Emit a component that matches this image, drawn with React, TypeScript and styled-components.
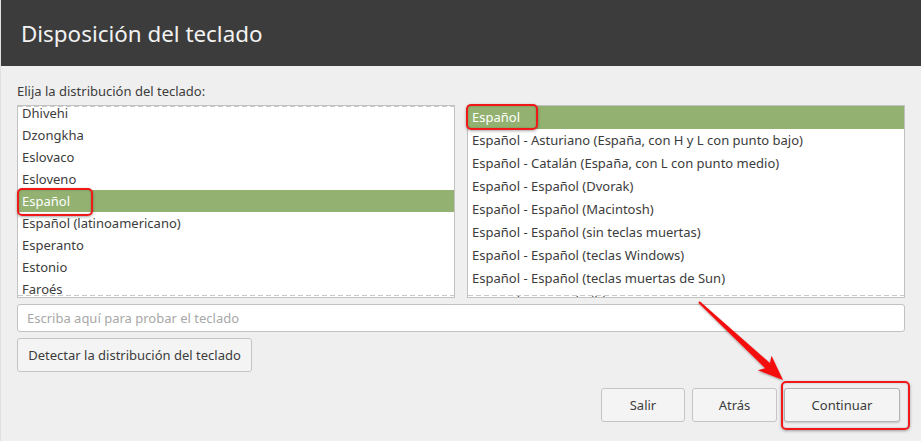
import React from "react";
import styled, { createGlobalStyle } from "styled-components";

const Global = createGlobalStyle`
  html, body { margin: 0; padding: 0; background: #efefef; }
  body { font-family: "Noto Sans", "DejaVu Sans", sans-serif; color: #3c3c3c; }
  * { box-sizing: border-box; }
`;

const Page = styled.div`
  position: relative;
  width: 921px;
  height: 441px;
  overflow: hidden;
  background: #efefef;
  display: flex;
  flex-direction: column;
  border-left: 1px solid #e0e0e0;
`;

const Header = styled.header`
  height: 66px;
  flex: none;
  background: #3c3c3c;
  display: flex;
  align-items: center;
  padding: 0 0 0 21px;
  margin-left: -1px;
`;

const Title = styled.h1`
  margin: 0;
  font-size: 22.4px;
  font-weight: 400;
  color: #f2f2f2;
  letter-spacing: 0;
`;

const Body = styled.main`
  flex: 1;
  display: flex;
  flex-direction: column;
  padding: 16px 16px 0 16px;
`;

const Label = styled.div`
  font-size: 13px;
  line-height: 18px;
  height: 18px;
  margin-bottom: 5px;
`;

const Lists = styled.div`
  display: flex;
  gap: 12px;
`;

const ListBox = styled.div<{ $h: number }>`
  position: relative;
  flex: 1;
  height: ${(p) => p.$h}px;
  background: #ffffff;
  border: 1px solid #c2c2c2;
  overflow: hidden;
`;

const Dashes = styled.div<{ $bottom?: boolean }>`
  position: absolute;
  left: 0;
  right: 0;
  height: 1px;
  ${(p) => (p.$bottom ? "bottom: 1px;" : "top: 0;")}
  background: repeating-linear-gradient(90deg, #c8c8c8 0 5px, transparent 5px 8px);
  z-index: 2;
`;

const Items = styled.ul<{ $shift: number }>`
  list-style: none;
  margin: ${(p) => -p.$shift}px 0 0 0;
  padding: 0;
`;

const Item = styled.li<{ $h: number; $sel?: boolean }>`
  height: ${(p) => p.$h}px;
  line-height: ${(p) => p.$h}px;
  padding-left: 4px;
  font-size: 13px;
  white-space: nowrap;
  background: ${(p) => (p.$sel ? "#93b170" : "transparent")};
  color: ${(p) => (p.$sel ? "#ffffff" : "#3c3c3c")};
`;

const Input = styled.input`
  margin-top: 6px;
  height: 28px;
  border: 1px solid #c2c2c2;
  border-radius: 3px;
  background: #fff;
  padding: 0 9px;
  font-family: inherit;
  font-size: 13px;
  color: #3c3c3c;
  outline: none;
  &::placeholder { color: #a8a8a8; }
`;

const Button = styled.button<{ $w: number; $default?: boolean }>`
  width: ${(p) => p.$w}px;
  height: 34px;
  background: #f4f4f4;
  border: 1px solid ${(p) => (p.$default ? "#b4b4b4" : "#c4c4c4")};
  border-radius: 3px;
  font-family: inherit;
  font-size: 13px;
  color: #3c3c3c;
  padding: 0;
  box-shadow: ${(p) => (p.$default ? "0 1px 2px rgba(0,0,0,0.18)" : "none")};
`;

const DetectRow = styled.div`
  margin-top: 6px;
  display: flex;
`;

const Footer = styled.footer`
  margin-top: 16px;
  display: flex;
  justify-content: flex-end;
  gap: 7px;
  padding-right: 5px;
`;

const Mark = styled.div<{ $x: number; $y: number; $w: number; $h: number }>`
  position: absolute;
  left: ${(p) => p.$x}px;
  top: ${(p) => p.$y}px;
  width: ${(p) => p.$w}px;
  height: ${(p) => p.$h}px;
  border: 2px solid #f01818;
  border-radius: 5px;
  box-shadow: 0 1px 3px rgba(0, 0, 0, 0.35), inset 0 0 2px rgba(0,0,0,0.25);
  pointer-events: none;
  z-index: 5;
`;

const Overlay = styled.svg`
  position: absolute;
  left: 0;
  top: 0;
  width: 921px;
  height: 441px;
  pointer-events: none;
  z-index: 6;
`;

const leftItems = [
  "Dhivehi",
  "Dzongkha",
  "Eslovaco",
  "Esloveno",
  "Español",
  "Español (latinoamericano)",
  "Esperanto",
  "Estonio",
  "Faroés",
  "Filipino",
];

const rightItems = [
  "Español",
  "Español - Asturiano (España, con H y L con punto bajo)",
  "Español - Catalán (España, con L con punto medio)",
  "Español - Español (Dvorak)",
  "Español - Español (Macintosh)",
  "Español - Español (sin teclas muertas)",
  "Español - Español (teclas Windows)",
  "Español - Español (teclas muertas de Sun)",
  "Español - Español (tilde muerta)",
];

export default function App() {
  return (
    <>
      <Global />
      <Page>
        <Header>
          <Title>Disposición del teclado</Title>
        </Header>
        <Body>
          <Label>Elija la distribución del teclado:</Label>
          <Lists>
            <ListBox $h={193}>
              <Dashes />
              <Items $shift={4}>
                {leftItems.map((t) => (
                  <Item key={t} $h={22} $sel={t === "Español"}>
                    {t}
                  </Item>
                ))}
              </Items>
              <Dashes $bottom />
            </ListBox>
            <ListBox $h={193}>
              <Items $shift={0}>
                {rightItems.map((t, i) => (
                  <Item key={t} $h={23} $sel={i === 0}>
                    {t}
                  </Item>
                ))}
              </Items>
              <Dashes $bottom />
            </ListBox>
          </Lists>
          <Input placeholder="Escriba aquí para probar el teclado" />
          <DetectRow>
            <Button $w={235}>Detectar la distribución del teclado</Button>
          </DetectRow>
          <Footer>
            <Button $w={84}>Salir</Button>
            <Button $w={85}>Atrás</Button>
            <Button $w={116} $default>
              Continuar
            </Button>
          </Footer>
        </Body>
        <Mark $x={16} $y={188} $w={76} $h={28} />
        <Mark $x={465} $y={104} $w={72} $h={26} />
        <Mark $x={780} $y={381} $w={129} $h={49} />
        <Overlay viewBox="0 0 921 441">
          <defs>
            <filter id="sh" x="-20%" y="-20%" width="140%" height="140%">
              <feDropShadow dx="0" dy="1" stdDeviation="1.2" floodColor="#000" floodOpacity="0.35" />
            </filter>
          </defs>
          <polygon
            filter="url(#sh)"
            fill="#f40c0c"
            points="697.3,302.7 764.2,368.3 756.9,370.3 782,380 770.5,355.7 769,363.1 698.7,301.3"
          />
        </Overlay>
      </Page>
    </>
  );
}
